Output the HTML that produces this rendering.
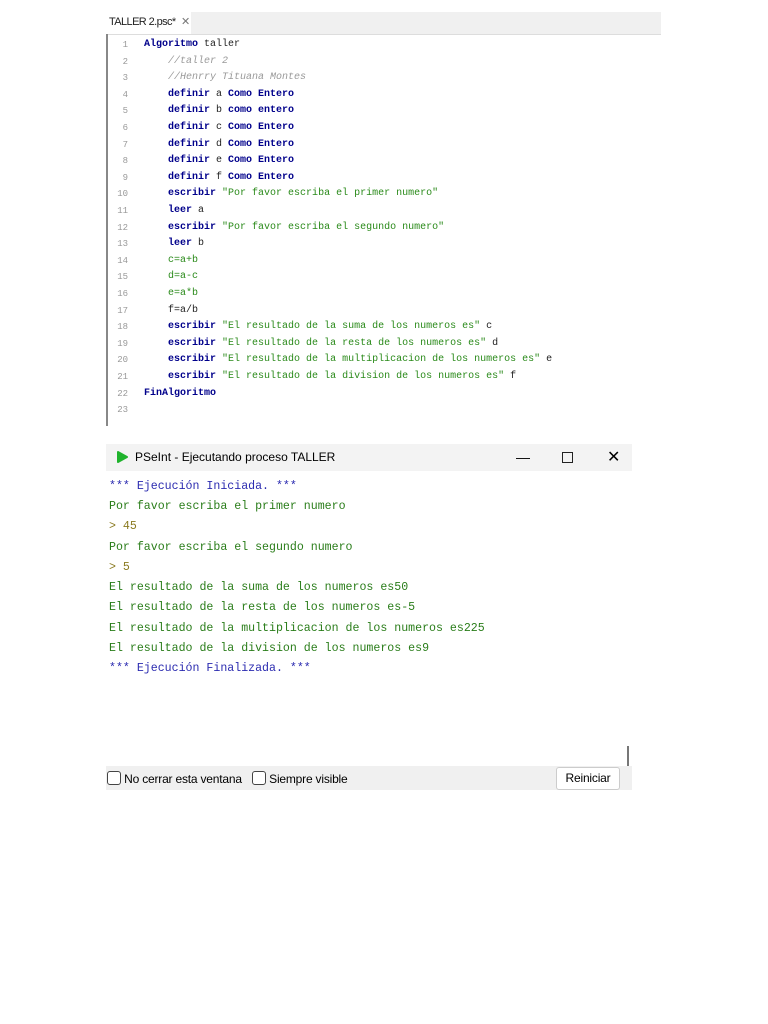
<!DOCTYPE html>
<html><head><meta charset="utf-8"><style>
body{margin:0;width:768px;height:1024px;background:#fff;position:relative;font-family:"Liberation Sans",sans-serif;overflow:hidden}
.abs{position:absolute}
.tabbar{left:106px;top:12px;width:555px;height:22px;background:#f0f0f0;border-bottom:1px solid #ddd}
.tab{left:106px;top:12px;width:85px;height:22px;background:#fff;font-size:11px;letter-spacing:-0.6px;line-height:21px;padding-left:3px;box-sizing:border-box;color:#222}
.ed{left:106px;top:34px;width:554px;height:392px;border-left:2px solid #888}
.ln{position:absolute;left:0;width:24px;text-align:right;font:9px "Liberation Mono",monospace;color:#999}
.cd{position:absolute;font:10px "Liberation Mono",monospace;white-space:pre;color:#222}
.k{color:#00008b;font-weight:bold}.s{color:#2a8a1a}.c{color:#999;font-style:italic}
.win{left:106px;top:444px;width:526px;height:346px;background:#fff}
.title{left:106px;top:444px;width:526px;height:27px;background:#f3f3f3;font-size:12px;line-height:27px}
.out{position:absolute;left:109px;font:11.6px "Liberation Mono",monospace;white-space:pre}
.b{color:#2b2bb0}.g{color:#2a7d1a}.o{color:#8a7a20}
.bot{left:106px;top:766px;width:526px;height:24px;background:#f0f0f0;font-size:12px;letter-spacing:-0.2px}
.cb{display:inline-block;width:12px;height:12px;border:1px solid #444;border-radius:3px;vertical-align:-2px;background:#fff}
</style></head><body>
<div class="abs tabbar"></div>
<div class="abs tab">TALLER 2.psc* <span style="color:#777;margin-left:3px">✕</span></div>
<div class="abs ed"></div>
<div id="code"></div>
<div class="abs win"></div>
<div class="abs title"><svg class="abs" style="left:9px;top:6px" width="14" height="14"><path d="M3 2 L12 7 L3 12Z" fill="#1fb32c" stroke="#1fb32c" stroke-width="2" stroke-linejoin="round"/></svg><span class="abs" style="left:29px">PSeInt - Ejecutando proceso TALLER</span>
<span class="abs" style="left:410px;top:0;font-size:14px">—</span>
<span class="abs" style="left:456px;top:8px;width:9px;height:9px;border:1px solid #222"></span>
<span class="abs" style="left:501px;top:0;font-size:16px">✕</span></div>
<div class="out b" style="top:480px">*** Ejecución Iniciada. ***</div>
<div class="out g" style="top:500px">Por favor escriba el primer numero</div>
<div class="out o" style="top:520px">&gt; 45</div>
<div class="out g" style="top:541px">Por favor escriba el segundo numero</div>
<div class="out o" style="top:561px">&gt; 5</div>
<div class="out g" style="top:581px">El resultado de la suma de los numeros es50</div>
<div class="out g" style="top:601px">El resultado de la resta de los numeros es-5</div>
<div class="out g" style="top:622px">El resultado de la multiplicacion de los numeros es225</div>
<div class="out g" style="top:642px">El resultado de la division de los numeros es9</div>
<div class="out b" style="top:662px">*** Ejecución Finalizada. ***</div>
<div class="abs" style="left:627px;top:746px;width:2px;height:24px;background:#777"></div>
<div class="abs bot"><span class="abs" style="left:1px;top:5px"><span class="cb"></span> No cerrar esta ventana</span><span class="abs" style="left:146px;top:5px"><span class="cb"></span> Siempre visible</span>
<span class="abs" style="left:450px;top:1px;width:62px;height:21px;background:#fff;border:1px solid #ccc;border-radius:3px;text-align:center;line-height:21px">Reiniciar</span></div>
<script>
var L=[
'<span class="k">Algoritmo</span> taller',
'    <span class="c">//taller 2</span>',
'    <span class="c">//Henrry Tituana Montes</span>',
'    <span class="k">definir</span> a <span class="k">Como Entero</span>',
'    <span class="k">definir</span> b <span class="k">como entero</span>',
'    <span class="k">definir</span> c <span class="k">Como Entero</span>',
'    <span class="k">definir</span> d <span class="k">Como Entero</span>',
'    <span class="k">definir</span> e <span class="k">Como Entero</span>',
'    <span class="k">definir</span> f <span class="k">Como Entero</span>',
'    <span class="k">escribir</span> <span class="s">"Por favor escriba el primer numero"</span>',
'    <span class="k">leer</span> a',
'    <span class="k">escribir</span> <span class="s">"Por favor escriba el segundo numero"</span>',
'    <span class="k">leer</span> b',
'    <span class="s">c=a+b</span>',
'    <span class="s">d=a-c</span>',
'    <span class="s">e=a*b</span>',
'    f=a/b',
'    <span class="k">escribir</span> <span class="s">"El resultado de la suma de los numeros es"</span> c',
'    <span class="k">escribir</span> <span class="s">"El resultado de la resta de los numeros es"</span> d',
'    <span class="k">escribir</span> <span class="s">"El resultado de la multiplicacion de los numeros es"</span> e',
'    <span class="k">escribir</span> <span class="s">"El resultado de la division de los numeros es"</span> f',
'<span class="k">FinAlgoritmo</span>',''];
var h='';for(var i=0;i<L.length;i++){var t=39+i*16.6;
h+='<div class="ln" style="left:104px;top:'+(t+1)+'px">'+(i+1)+'</div><div class="cd" style="left:144px;top:'+t+'px">'+L[i]+'</div>';}
document.getElementById('code').innerHTML=h;
</script>
</body></html>
